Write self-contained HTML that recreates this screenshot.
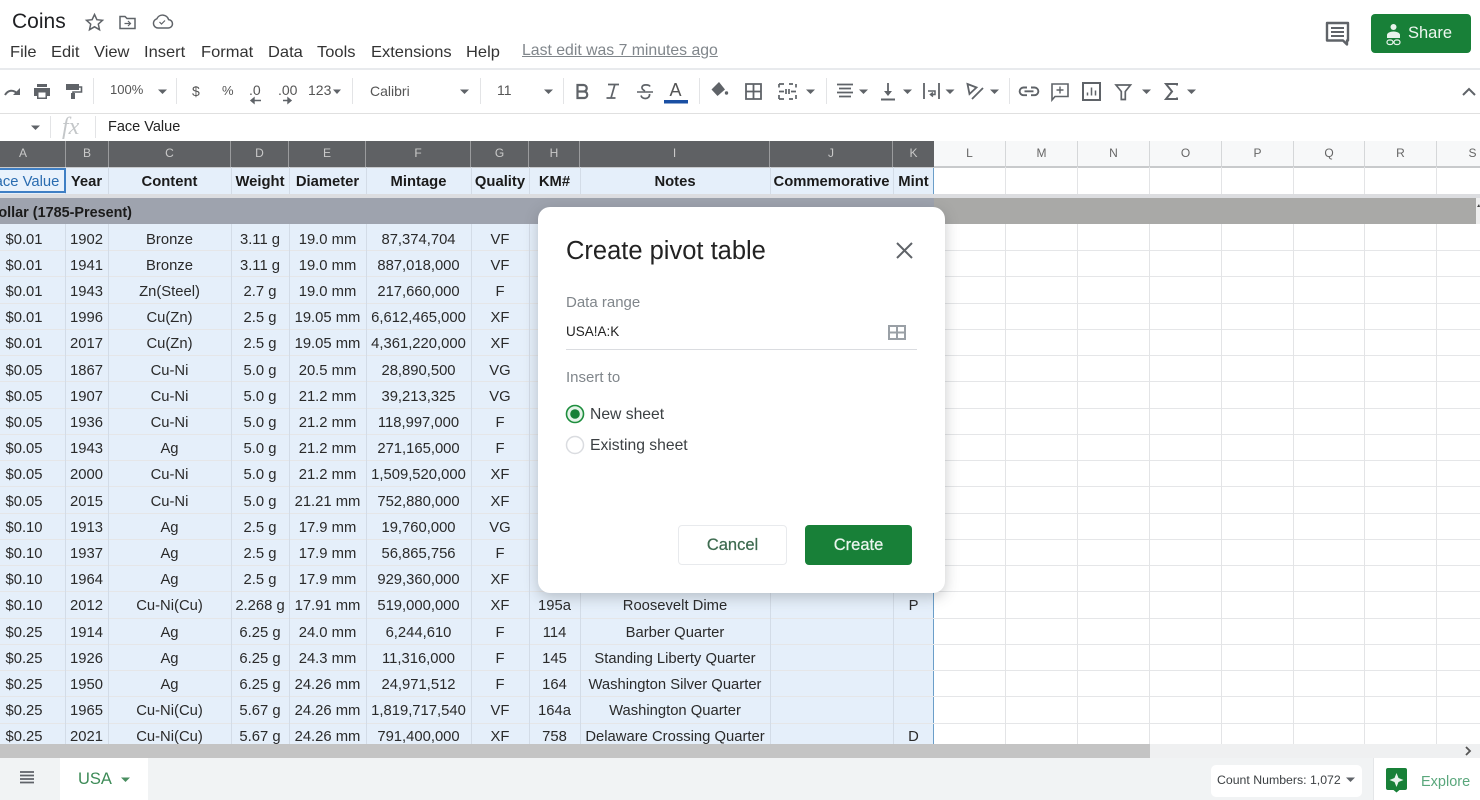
<!DOCTYPE html>
<html><head><meta charset="utf-8"><title>Coins</title>
<style>
*{box-sizing:border-box}
html,body{margin:0;padding:0;background:#fff}
body{width:1480px;height:800px;overflow:hidden;position:relative;font-family:"Liberation Sans",sans-serif;color:#222;filter:blur(.3px)}
.t{position:absolute;white-space:nowrap;line-height:20px}
.m{font-size:16px;top:43px;color:#333;transform-origin:left center;transform:scaleX(1.03)}
.tb{font-size:14px;top:81px;color:#555}
#sel{position:absolute;left:0;top:167px;width:934px;height:577px;background:#e5effa;border-right:1px solid #6b9ec9}
.v{position:absolute;width:1px;top:141px;height:603px;background:#e3e4e6}
.vs{position:absolute;width:1px;top:141px;height:603px;background:#d3dce7}
.h{position:absolute;left:0;width:1480px;height:1px;background:#e5e6e8}
.hd{position:absolute;top:141px;height:26px;font-size:12px;line-height:25px;text-align:center;color:#c9c9c9;background:#5f6164;border-right:1px solid #9a9b9d}
.hl{position:absolute;top:141px;height:26px;font-size:12px;line-height:25px;text-align:center;color:#666;background:#f7f8f9;border-right:1px solid #d5d7d9;border-bottom:1px solid #c8cacc}
.r{position:absolute;left:-20px;height:26px;display:grid;grid-template-columns:85px 43px 123px 58px 77px 105px 58px 51px 190px 123px 41px;font-size:14.8px;line-height:31px;text-align:center;color:#2a2a2a;white-space:nowrap}
.r span{display:block;overflow:visible}
.r span:first-child{padding-left:3px}
.b{font-weight:bold;color:#1b1b1b;font-size:14.8px}
#dlg{position:absolute;left:538px;top:207px;width:407px;height:386px;background:#fff;border-radius:12px;box-shadow:0 4px 14px rgba(60,64,67,.28)}
</style></head><body>

<div class="t" style="left:12px;top:9px;font-size:21px;line-height:26px;color:#202124">Coins</div>
<div class="t m" style="left:10px">File</div>
<div class="t m" style="left:51px">Edit</div>
<div class="t m" style="left:94px">View</div>
<div class="t m" style="left:144px">Insert</div>
<div class="t m" style="left:201px">Format</div>
<div class="t m" style="left:268px">Data</div>
<div class="t m" style="left:317px">Tools</div>
<div class="t m" style="left:371px">Extensions</div>
<div class="t m" style="left:466px">Help</div>
<div class="t" style="left:522px;top:41px;font-size:15.8px;color:#80868b;text-decoration:underline">Last edit was 7 minutes ago</div>

<div style="position:absolute;left:0;top:68px;width:1480px;height:2px;background:#e8eaed"></div>
<div style="position:absolute;left:0;top:113px;width:1480px;height:1px;background:#e0e0e0"></div>

<div class="t tb" style="left:110px;top:80px;font-size:13px">100%</div>
<div class="t tb" style="left:192px">$</div>
<div class="t tb" style="left:222px;font-size:13px">%</div>
<div class="t tb" style="left:249px;top:80px">.0</div>
<div class="t tb" style="left:278px;top:80px">.00</div>
<div class="t tb" style="left:308px;top:80px">123</div>
<div class="t tb" style="left:370px">Calibri</div>
<div class="t tb" style="left:497px;top:80px">11</div>
<div class="t" style="left:108px;top:117px;font-size:14.5px;color:#222">Face Value</div>
<div class="t" style="left:62px;top:114px;font-family:'Liberation Serif',serif;font-style:italic;font-size:24px;line-height:26px;color:#c4c7c9">fx</div>

<div id="sel"></div>
<div class="h" style="top:167px;background:#c8cacc"></div>
<div class="h" style="top:250px"></div><div class="h" style="top:276px"></div><div class="h" style="top:303px"></div><div class="h" style="top:329px"></div><div class="h" style="top:355px"></div><div class="h" style="top:381px"></div><div class="h" style="top:408px"></div><div class="h" style="top:434px"></div><div class="h" style="top:460px"></div><div class="h" style="top:486px"></div><div class="h" style="top:513px"></div><div class="h" style="top:539px"></div><div class="h" style="top:565px"></div><div class="h" style="top:591px"></div><div class="h" style="top:618px"></div><div class="h" style="top:644px"></div><div class="h" style="top:670px"></div><div class="h" style="top:696px"></div><div class="h" style="top:723px"></div>

<div class="vs" style="left:65px"></div><div class="vs" style="left:108px"></div><div class="vs" style="left:231px"></div><div class="vs" style="left:289px"></div><div class="vs" style="left:366px"></div><div class="vs" style="left:471px"></div><div class="vs" style="left:529px"></div><div class="vs" style="left:580px"></div><div class="vs" style="left:770px"></div><div class="vs" style="left:893px"></div>
<div class="v" style="left:1005px"></div><div class="v" style="left:1077px"></div><div class="v" style="left:1149px"></div><div class="v" style="left:1221px"></div><div class="v" style="left:1293px"></div><div class="v" style="left:1364px"></div><div class="v" style="left:1436px"></div>

<div class="hd" style="left:-20px;width:86px;padding-left:1px">A</div>
<div class="hd" style="left:66px;width:43px">B</div>
<div class="hd" style="left:109px;width:122px">C</div>
<div class="hd" style="left:231px;width:58px">D</div>
<div class="hd" style="left:289px;width:77px">E</div>
<div class="hd" style="left:366px;width:105px">F</div>
<div class="hd" style="left:471px;width:58px">G</div>
<div class="hd" style="left:529px;width:51px">H</div>
<div class="hd" style="left:580px;width:190px">I</div>
<div class="hd" style="left:770px;width:123px">J</div>
<div class="hd" style="left:893px;width:41px;border-right:0">K</div>
<div class="hl" style="left:934px;width:72px">L</div>
<div class="hl" style="left:1006px;width:72px">M</div>
<div class="hl" style="left:1078px;width:72px">N</div>
<div class="hl" style="left:1150px;width:72px">O</div>
<div class="hl" style="left:1222px;width:72px">P</div>
<div class="hl" style="left:1294px;width:71px">Q</div>
<div class="hl" style="left:1365px;width:72px">R</div>
<div class="hl" style="left:1437px;width:72px">S</div>

<div style="position:absolute;left:0;top:168px;width:66px;height:25px;border:2px solid #3f7fc4;border-left:0;background:#e9f2fc"></div>
<div class="r b" style="top:168px;line-height:29px"><span style="color:#2a6cb0;font-weight:normal;padding:0">Face Value</span><span>Year</span><span>Content</span><span>Weight</span><span>Diameter</span><span>Mintage</span><span>Quality</span><span>KM#</span><span>Notes</span><span>Commemorative</span><span>Mint</span></div>

<div style="position:absolute;left:0;top:194px;width:1480px;height:4px;background:#dcdde0"></div>
<div style="position:absolute;left:0;top:198px;width:934px;height:26px;background:#9ea3ae"></div>
<div style="position:absolute;left:934px;top:198px;width:542px;height:26px;background:#a9a9a7"></div>
<div class="t" style="left:-12px;top:203px;font-size:14.4px;font-weight:bold;color:#1b1b1b">Dollar (1785-Present)</div>

<div class="r" style="top:224.5px"><span>$0.01</span><span>1902</span><span>Bronze</span><span>3.11 g</span><span>19.0 mm</span><span>87,374,704</span><span>VF</span></div>
<div class="r" style="top:250.7px"><span>$0.01</span><span>1941</span><span>Bronze</span><span>3.11 g</span><span>19.0 mm</span><span>887,018,000</span><span>VF</span></div>
<div class="r" style="top:276.9px"><span>$0.01</span><span>1943</span><span>Zn(Steel)</span><span>2.7 g</span><span>19.0 mm</span><span>217,660,000</span><span>F</span></div>
<div class="r" style="top:303.1px"><span>$0.01</span><span>1996</span><span>Cu(Zn)</span><span>2.5 g</span><span>19.05 mm</span><span>6,612,465,000</span><span>XF</span></div>
<div class="r" style="top:329.3px"><span>$0.01</span><span>2017</span><span>Cu(Zn)</span><span>2.5 g</span><span>19.05 mm</span><span>4,361,220,000</span><span>XF</span></div>
<div class="r" style="top:355.5px"><span>$0.05</span><span>1867</span><span>Cu-Ni</span><span>5.0 g</span><span>20.5 mm</span><span>28,890,500</span><span>VG</span></div>
<div class="r" style="top:381.7px"><span>$0.05</span><span>1907</span><span>Cu-Ni</span><span>5.0 g</span><span>21.2 mm</span><span>39,213,325</span><span>VG</span></div>
<div class="r" style="top:407.9px"><span>$0.05</span><span>1936</span><span>Cu-Ni</span><span>5.0 g</span><span>21.2 mm</span><span>118,997,000</span><span>F</span></div>
<div class="r" style="top:434.1px"><span>$0.05</span><span>1943</span><span>Ag</span><span>5.0 g</span><span>21.2 mm</span><span>271,165,000</span><span>F</span></div>
<div class="r" style="top:460.3px"><span>$0.05</span><span>2000</span><span>Cu-Ni</span><span>5.0 g</span><span>21.2 mm</span><span>1,509,520,000</span><span>XF</span></div>
<div class="r" style="top:486.5px"><span>$0.05</span><span>2015</span><span>Cu-Ni</span><span>5.0 g</span><span>21.21 mm</span><span>752,880,000</span><span>XF</span></div>
<div class="r" style="top:512.7px"><span>$0.10</span><span>1913</span><span>Ag</span><span>2.5 g</span><span>17.9 mm</span><span>19,760,000</span><span>VG</span></div>
<div class="r" style="top:538.9px"><span>$0.10</span><span>1937</span><span>Ag</span><span>2.5 g</span><span>17.9 mm</span><span>56,865,756</span><span>F</span></div>
<div class="r" style="top:565.1px"><span>$0.10</span><span>1964</span><span>Ag</span><span>2.5 g</span><span>17.9 mm</span><span>929,360,000</span><span>XF</span></div>
<div class="r" style="top:591.3px"><span>$0.10</span><span>2012</span><span>Cu-Ni(Cu)</span><span>2.268 g</span><span>17.91 mm</span><span>519,000,000</span><span>XF</span><span>195a</span><span>Roosevelt Dime</span><span></span><span>P</span></div>
<div class="r" style="top:617.5px"><span>$0.25</span><span>1914</span><span>Ag</span><span>6.25 g</span><span>24.0 mm</span><span>6,244,610</span><span>F</span><span>114</span><span>Barber Quarter</span><span></span><span></span></div>
<div class="r" style="top:643.7px"><span>$0.25</span><span>1926</span><span>Ag</span><span>6.25 g</span><span>24.3 mm</span><span>11,316,000</span><span>F</span><span>145</span><span>Standing Liberty Quarter</span><span></span><span></span></div>
<div class="r" style="top:669.9px"><span>$0.25</span><span>1950</span><span>Ag</span><span>6.25 g</span><span>24.26 mm</span><span>24,971,512</span><span>F</span><span>164</span><span>Washington Silver Quarter</span><span></span><span></span></div>
<div class="r" style="top:696.1px"><span>$0.25</span><span>1965</span><span>Cu-Ni(Cu)</span><span>5.67 g</span><span>24.26 mm</span><span>1,819,717,540</span><span>VF</span><span>164a</span><span>Washington Quarter</span><span></span><span></span></div>
<div class="r" style="top:722.3px"><span>$0.25</span><span>2021</span><span>Cu-Ni(Cu)</span><span>5.67 g</span><span>24.26 mm</span><span>791,400,000</span><span>XF</span><span>758</span><span>Delaware Crossing Quarter</span><span></span><span>D</span></div>

<div style="position:absolute;left:0;top:744px;width:1150px;height:14px;background:#c4c4c4"></div>
<div style="position:absolute;left:1150px;top:744px;width:330px;height:14px;background:#eff0f1"></div>
<div style="position:absolute;left:0;top:758px;width:1480px;height:42px;background:#f1f3f4"></div>
<div style="position:absolute;left:60px;top:758px;width:88px;height:42px;background:#fff"></div>
<div class="t" style="left:78px;top:769px;font-size:16.5px;color:#3d8b57">USA</div>
<div style="position:absolute;left:1211px;top:765px;width:151px;height:32px;background:#fff;border-radius:5px"></div>
<div class="t" style="left:1217px;top:770px;font-size:12.3px;color:#3c4043">Count Numbers: 1,072</div>
<div style="position:absolute;left:1373px;top:758px;width:107px;height:42px;background:#fff;border-left:1px solid #e4e6e8"></div>
<div class="t" style="left:1421px;top:772px;font-size:14.5px;color:#5aa77c">Explore</div>

<svg width="1480" height="800" style="position:absolute;left:0;top:0" fill="none">
<g stroke="#5f6368" stroke-width="1.5">
<path d="M94.5 14.5l2.4 5.2 5.6.6-4.2 3.8 1.2 5.6-5-2.9-5 2.9 1.2-5.6-4.2-3.8 5.6-.6z"/>
<path d="M120 17v11.5h15V18.5h-8l-2-2h-5z"/><path d="M124.5 23.5h6M128 21l2.5 2.5-2.5 2.5" stroke-width="1.2"/>
<path d="M158 28h10a4.2 4.2 0 0 0 .6-8.4 6.3 6.3 0 0 0-11.8-.8A4.7 4.7 0 0 0 158 28z"/><path d="M159.5 22l2 2 3.5-3.5" stroke-width="1.2"/>
</g>
<path d="M1327 23h21v17.5h-1v4l-4-4h-16z" stroke="#5f6368" stroke-width="2.4" stroke-linejoin="round"/>
<path d="M1331 28h13M1331 32h13M1331 36h13" stroke="#5f6368" stroke-width="2"/>
<rect x="1371" y="14" width="100" height="39" rx="4" fill="#188038"/>
<circle cx="1393.5" cy="27" r="3" fill="#e8f3ec"/>
<path d="M1387 38v-3c0-2 3-3.5 6.5-3.5s6.5 1.5 6.5 3.5v3z" fill="#e8f3ec"/>
<rect x="1387" y="40" width="6" height="4.5" rx="2.2" stroke="#e8f3ec" stroke-width="1.2"/><rect x="1394" y="40" width="6" height="4.5" rx="2.2" stroke="#e8f3ec" stroke-width="1.2"/>
<text x="1408" y="38" font-family="Liberation Sans" font-size="16.5" fill="#eef6f0">Share</text>

<g stroke="#5f6368">
<path d="M5 95c3-5 8-6 13-1" stroke-width="2"/><path d="M20 88v7h-7z" fill="#5f6368" stroke="none"/>
<path d="M37 84h10v3H37zM34 88h16v8h-3v3H37v-3h-3z" fill="#5f6368" stroke="none"/><rect x="38.5" y="92.5" width="7" height="5" fill="#fff" stroke="none"/>
<path d="M66 84h13v6H66z" fill="#5f6368" stroke="none"/><path d="M79 87h2.5v5H73v7" stroke-width="1.6"/><path d="M71 93h4v6h-4z" fill="#5f6368" stroke="none"/>
<path d="M577.5 85h6a3 3 0 0 1 0 6.5h-6zM577.5 91.5h7a3.3 3.3 0 0 1 0 6.5h-7z" stroke-width="2.2"/>
<path d="M611 98l4-14M608 84.5h11M606.5 98h9" stroke-width="1.7"/>
<path d="M637 92h16" stroke-width="1.5"/><path d="M650 86.5c-1-2-7-2.5-8 .5-.5 2 1 3 3 4M649.5 94c.5 3-2 4.5-4 4.5s-4-1-4.500-3" stroke-width="1.7"/>
<text x="669.5" y="96" font-family="Liberation Sans" font-size="18" fill="#555" stroke="none">A</text>
<rect x="664" y="100" width="24" height="3.5" fill="#1a4fa3" stroke="none"/>
<path d="M719 82l-7.5 7.5 6 6.5 7.5-6.5z" fill="#5f6368" stroke="none"/><path d="M713 89.5h11l-5.5 5.5z" fill="#5f6368" stroke="none"/><circle cx="726.5" cy="93" r="1.7" fill="#5f6368" stroke="none"/>
<path d="M746 84h15v15h-15zM753.5 84v15M746 91.5h15" stroke-width="1.8"/>
<path d="M779 84h5M793 84h-4M779 84v3.5M796 84v3.5M779 99h5M793 99h-4M779 95v4M796 95v4M779 91.5h5M796 91.5h-5M786 89v5M789 89v5" stroke-width="1.7"/>
<path d="M837 84.5h16M839 88.5h12M837 92.5h16M839 96.5h12" stroke-width="1.8"/>
<path d="M881 99.5h14" stroke-width="2"/><path d="M888 83v11" stroke-width="1.8"/><path d="M884 91l4 5 4-5z" fill="#5f6368" stroke="none"/>
<path d="M924 83v16M939 83v16" stroke-width="1.8"/><path d="M928 91h7v3.5h-4M933 92.5l-2.5 2 2.5 2" stroke-width="1.5"/>
<path d="M967.5 84l9 3.5-7 6.5zM972 99l11-11" stroke-width="1.8"/>
<path d="M1031 87.5h3.5a3.8 3.8 0 0 1 0 7.7H1031M1027 87.5h-3.5a3.8 3.8 0 0 0 0 7.7h3.5M1024.5 91.3h9" stroke-width="1.9"/>
<path d="M1052 84h16v12.5h-13l-3 3.5z" stroke-width="1.6"/><path d="M1060 86.5v7M1056.5 90h7" stroke-width="1.4"/>
<rect x="1083" y="83" width="17" height="17" stroke-width="2"/><path d="M1087.5 95.5v-3M1091.5 95.5v-8M1095.5 95.5v-5" stroke-width="1.5"/>
<path d="M1116 85h14.5l-5.2 6.5v8h-4v-8z" stroke-width="1.7"/>
<path d="M1177 85.5v-1.500h-11l6 7.5-6 7.5h11v-1.500" stroke-width="2"/>
<path d="M1463 95l6-6 6 6" stroke-width="2"/>
</g>
<g fill="#5f6368">
<path d="M158 89.5h9l-4.5 4.5zM333 89.5h8l-4 4.5zM460 89.5h9l-4.5 4.5zM544 89.5h9l-4.5 4.5zM806 89.5h9l-4.5 4.5zM859 89.5h9l-4.5 4.5zM903 89.5h9l-4.5 4.5zM945.5 89.5h9l-4.5 4.5zM990 89.5h9l-4.5 4.5zM1142 89.5h9l-4.5 4.5zM1187 89.5h9l-4.5 4.5zM31 125.5h9l-4.5 4.5z"/>
</g>
<path d="M254 98l-3 2.5 3 2.5zM254 100.5h7M283 100.5h7M288 98l3 2.5-3 2.5z" stroke="#5f6368" stroke-width="1.4" fill="#5f6368"/>
<g stroke="#e3e4e6"><path d="M93.5 78v26M176.5 78v26M352.5 78v26M480.5 78v26M563.5 78v26M699.5 78v26M826.5 78v26M1009.5 78v26M50.5 116v22M95.5 116v22"/></g>

<path d="M20 772h14M20 775.5h14M20 779h14M20 782.5h14" stroke="#5f6368" stroke-width="1.8"/>
<path d="M121 777.5h9l-4.5 4.5z" fill="#4a8e60"/>
<path d="M1346 777.5h9l-4.5 4.5z" fill="#5f6368"/>
<path d="M1386 770a2 2 0 0 1 2-2h17a2 2 0 0 1 2 2v18a2 2 0 0 1-2 2h-5.5l-3 2.5-3-2.5h-5.5a2 2 0 0 1-2-2z" fill="#188038"/>
<path d="M1396.5 773l2 5 5 2-5 2-2 5-2-5-5-2 5-2z" fill="#e8f3ec"/>
<path d="M1466 747l4 4-4 4" stroke="#555" stroke-width="1.8"/>
<rect x="1476" y="198" width="4" height="26" fill="#eee"/>
<path d="M1477 207l2-3 1 3z" fill="#444"/>
</svg>

<div id="dlg">
<div class="t" style="left:28px;top:28px;font-size:25.5px;line-height:32px;color:#222">Create pivot table</div>
<svg width="407" height="386" style="position:absolute;left:0;top:0" fill="none">
<path d="M359 36l15 15M374 36l-15 15" stroke="#5f6368" stroke-width="2"/>
<path d="M351 119h16v13h-16zM359 119v13M351 125.5h16" stroke="#9aa0a6" stroke-width="2"/>
<circle cx="37" cy="207" r="8.5" stroke="#1e8e3e" stroke-width="1.6" fill="#e6f4ea"/>
<circle cx="37" cy="207" r="4.8" fill="#188038"/>
<circle cx="37" cy="238" r="8.5" stroke="#dadce0" stroke-width="1.5"/>
</svg>
<div class="t" style="left:28px;top:86px;font-size:15px;color:#80868b">Data range</div>
<div class="t" style="left:28px;top:115px;font-size:13.5px;color:#222">USA!A:K</div>
<div style="position:absolute;left:28px;top:142px;width:351px;height:1px;background:#dadce0"></div>
<div class="t" style="left:28px;top:161px;font-size:15px;color:#80868b">Insert to</div>
<div class="t" style="left:52px;top:198px;font-size:15.7px;color:#3c4043">New sheet</div>
<div class="t" style="left:52px;top:229px;font-size:15.7px;color:#3c4043">Existing sheet</div>
<div style="position:absolute;left:140px;top:318px;width:109px;height:40px;border:1px solid #e8eaed;border-radius:4px;text-align:center;line-height:39px;font-size:16.5px;color:#3e6b50;-webkit-text-stroke:.25px #3e6b50">Cancel</div>
<div style="position:absolute;left:267px;top:318px;width:107px;height:40px;background:#188038;border-radius:4px;text-align:center;line-height:40px;font-size:16.5px;color:#eaf5ee;-webkit-text-stroke:.25px #eaf5ee">Create</div>
</div>
</body></html>
